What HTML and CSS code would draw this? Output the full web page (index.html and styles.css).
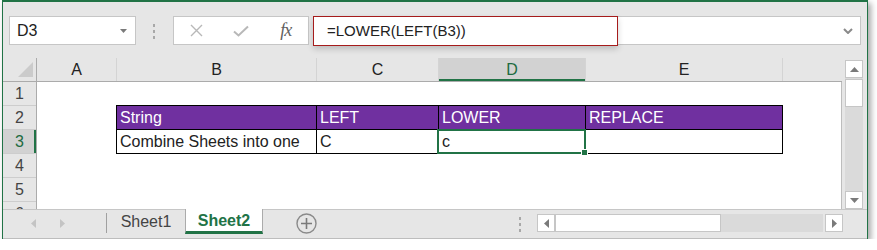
FILE: index.html
```html
<!DOCTYPE html>
<html lang="en">
<head>
  <meta charset="UTF-8">
  <title>Excel - LOWER(LEFT)</title>
  <link rel="stylesheet" href="styles.css">
</head>
<body>
  <div class="window">
    <div class="toolbar">
      <div class="namebox">
        <span>D3</span>
        <svg width="7" height="4" viewBox="0 0 7 4"><polygon points="0,0 7,0 3.5,4" fill="#7a7a7a"/></svg>
      </div>
      <div class="vgrip"><i></i><i></i><i></i></div>
      <div class="fnbox">
        <span class="fnbtn">
          <svg width="13" height="13" viewBox="0 0 13 13"><path d="M1 1L12 12M12 1L1 12" stroke="#b8b8b8" stroke-width="1.4"/></svg>
        </span>
        <span class="fnbtn">
          <svg width="16" height="12" viewBox="0 0 16 12"><path d="M1 6.5L5.5 10.5L15 1.5" fill="none" stroke="#b8b8b8" stroke-width="2"/></svg>
        </span>
        <span class="fnbtn fx">fx</span>
      </div>
      <div class="formula">
        <div class="formula-edit">=LOWER(LEFT(B3))</div>
        <svg class="chev" width="10" height="6" viewBox="0 0 10 6"><path d="M1 1L5 5L9 1" fill="none" stroke="#8a8a8a" stroke-width="2"/></svg>
      </div>
    </div>

    <div class="sheet">
      <div class="rowheads">
        <div class="corner">
          <svg width="15" height="15" viewBox="0 0 15 15"><polygon points="15,0 15,15 0,15" fill="#cbcbcb"/></svg>
        </div>
        <div class="rh">1</div>
        <div class="rh">2</div>
        <div class="rh rh-sel">3</div>
        <div class="rh">4</div>
        <div class="rh">5</div>
        <div class="rh">6</div>
      </div>

      <div class="main">
        <div class="colheads">
          <div class="ch col-a">A</div>
          <div class="ch col-b">B</div>
          <div class="ch col-c">C</div>
          <div class="ch col-d ch-sel">D</div>
          <div class="ch col-e">E</div>
          <div class="ch col-rest"></div>
        </div>
        <div class="cells">
          <table class="data">
            <tr class="head">
              <td class="col-b">String</td>
              <td class="col-c">LEFT</td>
              <td class="col-d">LOWER</td>
              <td class="col-e">REPLACE</td>
            </tr>
            <tr>
              <td class="col-b">Combine Sheets into one</td>
              <td class="col-c">C</td>
              <td class="col-d sel">c</td>
              <td class="col-e"></td>
            </tr>
          </table>
        </div>
      </div>

      <div class="vscroll">
        <div class="sbtn">
          <svg width="9" height="5" viewBox="0 0 9 5"><polygon points="0,5 4.5,0 9,5" fill="#7a7a7a"/></svg>
        </div>
        <div class="vtrack"><div class="vthumb"></div></div>
        <div class="sbtn">
          <svg width="9" height="5" viewBox="0 0 9 5"><polygon points="0,0 9,0 4.5,5" fill="#7a7a7a"/></svg>
        </div>
      </div>
    </div>

    <div class="tabbar">
      <div class="tabnav">
        <svg width="5" height="9" viewBox="0 0 5 9"><polygon points="5,0 5,9 0,4.5" fill="#c4c4c4"/></svg>
        <svg width="5" height="9" viewBox="0 0 5 9"><polygon points="0,0 0,9 5,4.5" fill="#c4c4c4"/></svg>
      </div>
      <div class="tabsep"></div>
      <div class="tab">Sheet1</div>
      <div class="tab tab-active">Sheet2</div>
      <div class="addsheet">
        <svg width="21" height="21" viewBox="0 0 21 21">
          <circle cx="10.5" cy="10.5" r="9.5" fill="none" stroke="#8a8a8a" stroke-width="1.4"/>
          <path d="M10.5 5V16M5 10.5H16" stroke="#7a7a7a" stroke-width="1.6"/>
        </svg>
      </div>
      <div class="spacer"></div>
      <div class="hgrip"><i></i><i></i><i></i></div>
      <div class="hscroll">
        <div class="sbtn">
          <svg width="5" height="9" viewBox="0 0 5 9"><polygon points="5,0 5,9 0,4.5" fill="#7a7a7a"/></svg>
        </div>
        <div class="hthumb"></div>
        <div class="htrack"></div>
        <div class="sbtn">
          <svg width="5" height="9" viewBox="0 0 5 9"><polygon points="0,0 0,9 5,4.5" fill="#7a7a7a"/></svg>
        </div>
      </div>
    </div>
  </div>
</body>
</html>
```

FILE: styles.css
```css
body {
  margin: 0;
  background: #ffffff;
  font-family: "Liberation Sans", Arial, sans-serif;
  color: #222;
}
.window {
  margin-left: 2px;
  width: 866px;
  box-sizing: border-box;
  border: 1px solid #217346;
  border-top-width: 2px;
  border-bottom: none;
  background: #e6e6e6;
  box-shadow: 3px 3px 6px rgba(0, 0, 0, 0.35);
}

/* formula bar row */
.toolbar {
  height: 56px;
  box-sizing: border-box;
  padding: 14px 0 0 6px;
  display: flex;
  align-items: flex-start;
}
.namebox {
  width: 127px;
  height: 29px;
  box-sizing: border-box;
  background: #fff;
  border: 1px solid #c6c6c6;
  display: flex;
  align-items: center;
  justify-content: space-between;
  padding: 0 8px 0 7px;
  font-size: 16px;
}
.vgrip {
  display: flex;
  flex-direction: column;
  gap: 3px;
  margin: 8px 18px 0 17px;
}
.vgrip i, .hgrip i {
  display: block;
  width: 2px;
  height: 3px;
  background: #a8a8a8;
}
.fnbox {
  width: 136px;
  height: 29px;
  box-sizing: border-box;
  background: #fff;
  border: 1px solid #c6c6c6;
  display: flex;
}
.fnbtn {
  width: 45px;
  display: flex;
  align-items: center;
  justify-content: center;
}
.fx {
  font-family: "Liberation Serif", serif;
  font-style: italic;
  font-size: 18px;
  color: #606060;
  letter-spacing: -1px;
}
.formula {
  position: relative;
  width: 548px;
  height: 29px;
  margin-left: 4px;
  box-sizing: border-box;
  background: #fff;
  border: 1px solid #c6c6c6;
}
.formula-edit {
  position: absolute;
  left: -1px;
  top: -1px;
  width: 305px;
  height: 30px;
  box-sizing: border-box;
  border: 1px solid #a61c1c;
  background: #fff;
  box-shadow: 0 3px 6px rgba(0, 0, 0, 0.18);
  padding-left: 13px;
  font-size: 15px;
  line-height: 28px;
}
.chev {
  position: absolute;
  right: 7px;
  top: 11px;
}

/* grid */
.sheet {
  display: flex;
  height: 151px;
}
.rowheads {
  width: 34px;
  box-sizing: border-box;
  border-right: 1px solid #ababab;
  display: flex;
  flex-direction: column;
  overflow: hidden;
}
.corner {
  height: 24px;
  flex: none;
  box-sizing: border-box;
  border-bottom: 1px solid #ababab;
  display: flex;
  align-items: flex-end;
  justify-content: flex-end;
  padding: 0 3px 4px 0;
}
.rh {
  height: 24px;
  flex: none;
  box-sizing: border-box;
  border-bottom: 1px solid #cdcdcd;
  font-size: 16px;
  color: #444;
  display: flex;
  align-items: center;
  justify-content: center;
}
.rh-sel {
  background: #d2d2d2;
  color: #1e6b41;
  box-shadow: inset -2px 0 0 #217346;
}
.main {
  width: 805px;
  display: flex;
  flex-direction: column;
}
.colheads {
  height: 24px;
  box-sizing: border-box;
  border-bottom: 1px solid #ababab;
  display: flex;
}
.ch {
  box-sizing: border-box;
  border-right: 1px solid #d4d4d4;
  font-size: 16px;
  display: flex;
  align-items: center;
  justify-content: center;
}
.ch.col-a { width: 80px; }
.ch.col-b { width: 200px; }
.ch.col-c { width: 122px; }
.ch.col-d { width: 147px; }
.ch.col-e { width: 197px; }
.ch.col-rest { flex: 1; border-right: none; }
.ch-sel {
  background: #d2d2d2;
  color: #1e6b41;
  box-shadow: inset 0 -2px 0 #217346;
}
.cells {
  flex: 1;
  background: #fff;
  border-right: 1px solid #bdbdbd;
  overflow: hidden;
}
.data {
  border-collapse: separate;
  border-spacing: 0;
  margin: 23px 0 0 79px;
  font-size: 16px;
}
.data td {
  box-sizing: border-box;
  height: 24px;
  padding: 0 0 0 3px;
  border-right: 1px solid #000;
  border-bottom: 1px solid #000;
  white-space: nowrap;
}
.data td:first-child {
  border-left: 1px solid #000;
}
.data .head td {
  height: 25px;
  border-top: 1px solid #000;
  background: #7030a0;
  color: #fff;
}
.data td.col-b { width: 201px; }
.data td.col-c { width: 122px; }
.data td.col-d { width: 147px; }
.data td.col-e { width: 197px; }
.data td.sel {
  position: relative;
}
.data td.sel::after {
  content: "";
  position: absolute;
  left: -2px;
  top: -1px;
  right: -1px;
  bottom: -1px;
  border: 2px solid #217346;
}
.data td.sel::before {
  content: "";
  position: absolute;
  right: -3px;
  bottom: -3px;
  width: 5px;
  height: 5px;
  background: #217346;
  border: 1px solid #fff;
  z-index: 1;
}

/* scrollbars */
.vscroll {
  width: 25px;
  box-sizing: border-box;
  padding: 2px 4px 0 3px;
  display: flex;
  flex-direction: column;
}
.sbtn {
  width: 18px;
  height: 18px;
  flex: none;
  box-sizing: border-box;
  background: #fff;
  border: 1px solid #c6c6c6;
  display: flex;
  align-items: center;
  justify-content: center;
}
.vtrack {
  flex: 1;
  background: #dadada;
  padding-top: 1px;
}
.vthumb {
  height: 28px;
  box-sizing: border-box;
  background: #fff;
  border: 1px solid #c6c6c6;
}

/* sheet tabs */
.tabbar {
  height: 30px;
  box-sizing: border-box;
  border-bottom: 1px solid #bdbdbd;
  background: linear-gradient(#c6c6c6, #c6c6c6) top / 100% 1px no-repeat, #e6e6e6;
  display: flex;
  align-items: flex-start;
}
.tabnav {
  width: 103px;
  height: 29px;
  display: flex;
  align-items: center;
  gap: 24px;
  padding-left: 28px;
  box-sizing: border-box;
}
.tabsep {
  width: 1px;
  height: 20px;
  margin-top: 4px;
  background: #a0a0a0;
}
.tab {
  width: 78px;
  height: 25px;
  box-sizing: border-box;
  padding-top: 1px;
  font-size: 16px;
  color: #444;
  display: flex;
  align-items: center;
  justify-content: center;
}
.tab-active {
  background: #fff;
  border-left: 1px solid #ababab;
  border-right: 1px solid #ababab;
  border-bottom: 3px solid #217346;
  color: #217346;
  font-weight: bold;
}
.addsheet {
  margin: 4px 0 0 33px;
  height: 21px;
}
.spacer {
  flex: 1;
}
.hgrip {
  display: flex;
  flex-direction: column;
  gap: 3px;
  margin: 8px 16px 0 0;
}
.hscroll {
  width: 306px;
  height: 18px;
  margin: 5px 24px 0 0;
  display: flex;
}
.hthumb {
  width: 166px;
  box-sizing: border-box;
  background: #fff;
  border: 1px solid #c6c6c6;
}
.htrack {
  flex: 1;
  background: #dadada;
  margin-right: 2px;
}
```
